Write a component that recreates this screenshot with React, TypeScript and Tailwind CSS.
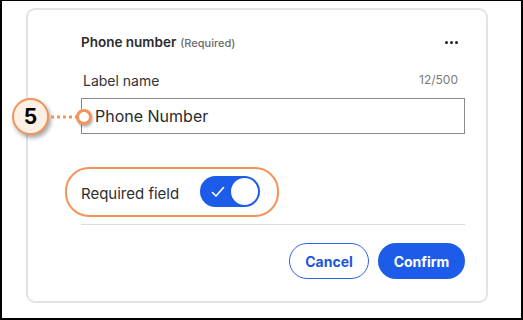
import React from "react";

export default function App() {
  return (
    <div
      className="relative w-[523px] h-[320px] bg-white border-l-2 border-r-2 border-b-2 border-t border-black overflow-hidden"
      style={{ fontFamily: "Inter, 'Open Sans', sans-serif" }}
    >
      <div className="pt-[7px] pl-[24px]">
        <div className="w-[462px] h-[295px] rounded-[9px] border-2 border-[#e3e3e3] pl-[53px] pr-[21px] pt-[22px]">
          <div className="flex items-center justify-between h-[20px]">
            <div className="flex items-baseline gap-[4px]">
              <span className="text-[13.5px] font-semibold text-[#2b2b2b]">Phone number</span>
              <span className="text-[11px] font-medium text-[#6b6b6b]">(Required)</span>
            </div>
            <div className="flex gap-[2px] pr-[7px]">
              <span className="w-[3px] h-[3px] rounded-full bg-[#222]" />
              <span className="w-[3px] h-[3px] rounded-full bg-[#222]" />
              <span className="w-[3px] h-[3px] rounded-full bg-[#222]" />
            </div>
          </div>
          <div className="mt-[18px] flex items-center justify-between h-[20px] pl-[2px]">
            <span className="text-[14px] text-[#333]">Label name</span>
            <span className="text-[12px] text-[#7a7a7a] pr-[7px]">12/500</span>
          </div>
          <div className="mt-[8px] h-[36px] border border-[#8a8a8a] flex items-center pl-[13px]">
            <span className="text-[16px] text-[#2a2a2a]">Phone Number</span>
          </div>
          <div className="mt-[42px] flex items-center h-[31px]">
            <span className="text-[15px] text-[#2e2e2e] mt-[6px]">Required field</span>
            <div className="ml-[21px] w-[60px] h-[31px] rounded-full bg-[#1c5ce8] flex items-center justify-between pl-[11px] pr-[2px]">
              <svg width="14" height="12" viewBox="0 0 14 12" fill="none">
                <path d="M1.5 6.5 L5 10 L12.5 1.5" stroke="white" strokeWidth="1.6" strokeLinecap="round" strokeLinejoin="round" />
              </svg>
              <span className="w-[27px] h-[27px] rounded-full bg-white" />
            </div>
          </div>
          <div className="mt-[17px] border-t border-[#dcdcdc]" />
          <div className="mt-[18px] flex justify-end gap-[9px]">
            <button className="w-[80px] h-[36px] rounded-full border border-[#2a63e8] text-[#1d56dc] text-[14px] font-bold bg-white">
              Cancel
            </button>
            <button className="w-[87px] h-[36px] rounded-full bg-[#1c5ce8] text-white text-[14px] font-bold">
              Confirm
            </button>
          </div>
        </div>
      </div>

      {/* Callout 5 */}
      <div className="absolute left-[10px] top-[97px] w-[37px] h-[37px] rounded-full bg-[#fdf1e6] border-2 border-[#f4935a] flex items-center justify-center shadow-[2px_3px_4px_rgba(0,0,0,0.35)]">
        <span className="text-[21px] font-bold text-black leading-none">5</span>
      </div>
      <svg className="absolute left-[49px] top-[114px]" width="26" height="4">
        <line x1="0" y1="2" x2="26" y2="2" stroke="#f4935a" strokeWidth="3" strokeDasharray="3 3" />
      </svg>
      <div className="absolute left-[74px] top-[108px] w-[16px] h-[16px] rounded-full bg-white border-[3px] border-[#f4935a] shadow-[1px_2px_3px_rgba(0,0,0,0.3)]" />

      {/* Highlight around required field */}
      <div className="absolute left-[63px] top-[166px] w-[214px] h-[50px] rounded-[24px] border-[2.5px] border-[#f4935a]" />
    </div>
  );
}
